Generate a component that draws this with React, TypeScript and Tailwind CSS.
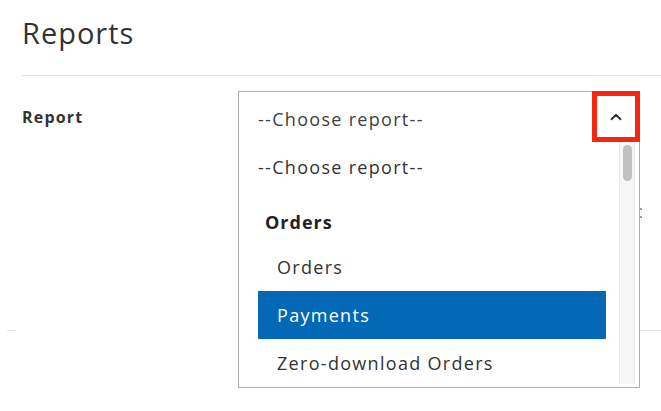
import { ChevronUp } from 'lucide-react';

const font = { fontFamily: '"Open Sans", "DejaVu Sans", sans-serif' };

export default function App() {
  return (
    <div className="relative h-[411px] w-[661px] overflow-hidden bg-white text-[#333]" style={font}>
      <div className="pl-[22px]">
        <h1 className="pt-[15px] text-[29px] leading-[36px] font-normal tracking-[1px] text-[#333]">Reports</h1>
        <div className="mt-[24px] h-px bg-[#e3e3e3]" />
        <div className="flex pt-[15px]">
          <label className="w-[216px] pt-[15px] text-[16px] leading-[22px] font-bold tracking-[1.2px] text-[#333]">
            Report
          </label>
          <div className="relative h-[297px] w-[402px]">
            <div className="absolute inset-0 z-10 flex flex-col border border-[#adadad] bg-white">
              <div className="flex h-[51px] shrink-0 items-center pt-[3px] pl-[19px] text-[18px] tracking-[1.3px] text-[#404040]">
                --Choose report--
              </div>
              <div className="flex min-h-0 flex-1">
                <div className="flex-1 pl-[19px] pr-[13px] text-[18px] tracking-[1.3px]">
                  <div className="flex h-[48px] items-center text-[#333]">--Choose report--</div>
                  <div className="flex h-[52px] items-end pb-[7px] pl-[7px] text-[18px] font-bold tracking-[1px] text-[#222]">
                    Orders
                  </div>
                  <div className="flex h-[48px] items-center pl-[19px] text-[#333]">Orders</div>
                  <div className="flex h-[48px] items-center bg-[#0369b6] pl-[19px] text-white">Payments</div>
                  <div className="flex h-[48px] items-center pl-[19px] text-[#333]">Zero-download Orders</div>
                </div>
                <div className="mr-[4px] mb-[3px] w-[16px] border-x border-[#e8e8e8] bg-[#f7f7f7] pt-[2px]">
                  <div className="mx-auto h-[36px] w-[9px] rounded-full bg-[#c1c1c1]" />
                </div>
              </div>
            </div>
            <div className="absolute top-0 right-0 z-20 flex h-[51px] w-[48px] items-center justify-center border-[5px] border-[#f7260f]">
              <ChevronUp className="h-[18px] w-[18px] text-[#333]" strokeWidth={2.4} />
            </div>
          </div>
        </div>
      </div>
      <div className="absolute top-[330px] left-[7px] h-px w-[9px] bg-[#dde6ea]" />
      <div className="absolute top-[330px] left-[640px] h-px w-[21px] bg-[#dde6ea]" />
      <div className="absolute top-[208px] left-[640px] h-[2px] w-[2px] bg-[#999]" />
      <div className="absolute top-[216px] left-[640px] h-[2px] w-[2px] bg-[#999]" />
    </div>
  );
}
